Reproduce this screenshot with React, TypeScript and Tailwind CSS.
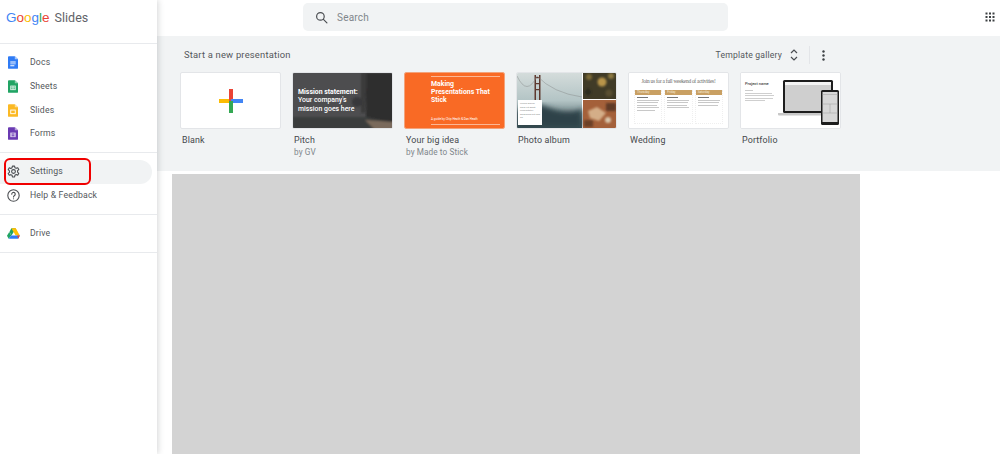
import React from "react";

const font = { fontFamily: '"Roboto", "Liberation Sans", sans-serif' };

function FileIcon({ body, fold, children }: { body: string; fold: string; children?: React.ReactNode }) {
  return (
    <svg width="10" height="13" viewBox="0 0 11 14">
      <path d="M1 0h6.500L11 3.500V13a1 1 0 0 1-1 1H1a1 1 0 0 1-1-1V1a1 1 0 0 1 1-1z" fill={body} />
      <path d="M7.500 0L11 3.500H7.500z" fill={fold} />
      {children}
    </svg>
  );
}

const DocsIcon = () => (
  <FileIcon body="#2f7bf5" fold="#a6c8fb">
    <path d="M2.500 6h6v1h-6zM2.500 8h6v1h-6zM2.500 10h4.500v1h-4.500z" fill="#fff" />
  </FileIcon>
);
const SheetsIcon = () => (
  <FileIcon body="#21a464" fold="#8ed1b1">
    <path d="M2.500 6h6v5h-6z" fill="#e4f4ec" />
    <path d="M3.500 7h1.500v1h-1.500zM6 7h1.500v1H6zM3.500 9h1.500v1h-1.500zM6 9h1.500v1H6z" fill="#21a464" />
  </FileIcon>
);
const SlidesIcon = () => (
  <FileIcon body="#fbb924" fold="#fde09a">
    <path d="M2.500 6h6v5h-6z" fill="#fff" />
    <path d="M3.500 7h4v3h-4z" fill="#fbb924" />
  </FileIcon>
);
const FormsIcon = () => (
  <FileIcon body="#6a3ab2" fold="#b9a0dd">
    <path d="M2.500 6h6v5h-6z" fill="#d9cdec" />
    <path d="M4 7h3v1H4zM4 9h3v1H4z" fill="#6a3ab2" />
  </FileIcon>
);

const GearIcon = () => (
  <svg width="13" height="13" viewBox="0 0 24 24" fill="none" stroke="#4a4d51" strokeWidth="2" strokeLinejoin="round">
    <path d="M10 2h4l.6 3 2.400 1.200 2.800-1.200 2 3.500-2.300 2 0 2.800 2.300 2-2 3.500-2.800-1.200L14.600 19 14 22h-4l-.6-3-2.400-1.200-2.800 1.200-2-3.500 2.300-2 0-2.800-2.300-2 2-3.500 2.800 1.200L9.400 5z" />
    <circle cx="12" cy="12" r="3.500" />
  </svg>
);
const HelpIcon = () => (
  <svg width="13" height="13" viewBox="0 0 24 24" fill="none" stroke="#4a4d51" strokeWidth="2" strokeLinecap="round">
    <circle cx="12" cy="12" r="10.500" />
    <path d="M8.800 9.500a3.200 3.200 0 1 1 5 2.600c-1.100.8-1.800 1.400-1.800 2.700" />
    <path d="M12 18v.1" />
  </svg>
);
const DriveIcon = () => (
  <svg width="13" height="11.500" viewBox="0 0 14 12">
    <path d="M4.700 0h4.600L7 4.400 4.900 8 2.600 4z" fill="#1fa463" />
    <path d="M4.700 0h4.600l4.600 8H9.300z" fill="#ffc107" />
    <path d="M2.400 4L0 8.200l1.800 3.200L4.700 8z" fill="#1fa463" />
    <path d="M4.400 8h9.500l-1.900 3.400H1.900z" fill="#2f7bf5" />
    <path d="M11 8h2.900L12 11.400z" fill="#ea4335" />
    <path d="M7 0h2.300l2.300 4z" fill="#fbbc04" />
  </svg>
);

function NavRow({ icon, label, active }: { icon: React.ReactNode; label: string; active?: boolean }) {
  return (
    <div className={`flex h-[23.700px] w-[152px] items-center rounded-r-full ${active ? "bg-[#f1f3f4]" : ""}`}>
      <div className="flex w-[26px] shrink-0 justify-center">{icon}</div>
      <span className="ml-[4px] text-[8.700px] tracking-[0.15px] text-[#54575b]">{label}</span>
    </div>
  );
}

function Thumb({ children, className = "" }: { children?: React.ReactNode; className?: string }) {
  return (
    <div className={`relative h-[57px] w-[101px] overflow-hidden rounded-[2px] border border-[#e3e5e8] ${className}`}>
      {children}
    </div>
  );
}

function Card({ thumb, title, sub }: { thumb: React.ReactNode; title: string; sub?: string }) {
  return (
    <div className="w-[101px]">
      {thumb}
      <div className="mt-[5px] pl-[2px] text-[8.900px] leading-[13px] tracking-[0.15px] text-[#45484c]">{title}</div>
      {sub && <div className="pl-[2px] text-[8.200px] leading-[10px] tracking-[0.1px] text-[#80868b]">{sub}</div>}
    </div>
  );
}

const PlusArt = () => (
  <div className="flex h-full items-center justify-center">
    <svg width="24" height="24" viewBox="0 0 24 24">
      <rect x="0" y="10" width="12" height="4" fill="#fbbc04" />
      <rect x="10" y="0" width="4" height="12" fill="#ea4335" />
      <rect x="12" y="10" width="12" height="4" fill="#4285f4" />
      <rect x="10" y="12" width="4" height="12" fill="#34a853" />
    </svg>
  </div>
);

const PitchArt = () => (
  <div className="h-full bg-[#4d4d4f] px-[5px] pt-[15px]">
    <svg className="absolute inset-0" width="101" height="57" viewBox="0 0 101 57">
      <defs>
        <filter id="pb"><feGaussianBlur stdDeviation="1" /></filter>
      </defs>
      <g filter="url(#pb)">
        <path d="M73 0h28v57H73z" fill="#2f2e2e" />
        <path d="M68 0h6l-2 40h-4z" fill="#3a3a3b" />
        <circle cx="64" cy="29" r="5" fill="#38383a" />
        <path d="M0 44h74l27 6v7H0z" fill="#3a3c3d" />
        <path d="M72 47l29 2v8H82z" fill="#7a6a5c" />
      </g>
    </svg>
    <div className="relative whitespace-nowrap text-[6.900px] leading-[8.300px] text-white">
      <div className="font-bold">Mission statement:</div>
      <div className="font-medium">Your company's</div>
      <div className="font-medium">mission goes here</div>
    </div>
  </div>
);

const BigIdeaArt = () => (
  <div className="relative h-full bg-[#f96a25] pl-[26px] pt-[3px] text-white">
    <div className="h-[1px] w-[69px] bg-[#fbb795]" />
    <div className="mt-[3px] text-[6.900px] font-bold leading-[8px]">
      Making
      <br />
      <span className="whitespace-nowrap">Presentations That</span>
      <br />
      Stick
    </div>
    <div className="mt-[13px] whitespace-nowrap text-[3px] leading-[4px]">A guide by Chip Heath &amp; Dan Heath</div>
    <div className="mt-[3px] h-[1px] w-[69px] bg-[#fbb795]" />
  </div>
);

const PhotoArt = () => (
  <svg width="99" height="55" viewBox="0 0 99 55" className="block">
    <defs>
      <linearGradient id="fog" x1="0" y1="0" x2="0" y2="1">
        <stop offset="0" stopColor="#d4dcdb" />
        <stop offset="0.5" stopColor="#b3c4c5" />
        <stop offset="1" stopColor="#3b5257" />
      </linearGradient>
      <filter id="ph"><feGaussianBlur stdDeviation="1.300" /></filter>
      <filter id="ph2"><feGaussianBlur stdDeviation="2.500" /></filter>
    </defs>
    <rect width="99" height="55" fill="#fff" />
    <rect width="65" height="55" fill="url(#fog)" />
    <path d="M0 55V38Q18 28 30 34Q50 42 65 36V55z" fill="#2d4348" filter="url(#ph2)" />
    <path d="M17.500 2h1.500v26h-1.500zM22 2h1.500v26H22zM17.500 4h6v1.200h-6zM17.500 10h6v1.200h-6zM17.500 16h6v1.200h-6z" fill="#5f3a30" />
    <path d="M0 3Q10 24 20 3Q36 20 65 24" fill="none" stroke="#8b8f8e" strokeWidth="0.500" />
    <svg x="66" y="0" width="33" height="26" viewBox="0 0 33 26">
      <rect width="33" height="26" fill="#403b27" />
      <g filter="url(#ph)">
        <circle cx="19" cy="9" r="4.500" fill="#b8944a" />
        <circle cx="6" cy="4" r="3" fill="#7d6b37" />
        <circle cx="28" cy="3" r="3" fill="#8c7840" />
        <circle cx="5" cy="19" r="3" fill="#2a2a1c" />
        <circle cx="26" cy="20" r="3.500" fill="#5a5030" />
      </g>
    </svg>
    <svg x="66" y="27" width="33" height="28" viewBox="0 0 33 28">
      <rect width="33" height="28" fill="#a4603a" />
      <g filter="url(#ph)">
        <path d="M5 11l9-4 9 6-7 8-9-3z" fill="#d4ae88" />
        <rect x="23" y="3" width="10" height="8" fill="#5f3a26" />
        <rect x="1" y="20" width="9" height="7" fill="#6c4028" />
        <circle cx="25" cy="20" r="3" fill="#d9c6ac" />
      </g>
    </svg>
  </svg>
);

const WeddingArt = () => (
  <div className="flex h-full flex-col bg-white px-[5px] pt-[4px]">
    <div
      className="whitespace-nowrap text-center text-[5.400px] leading-[8px] tracking-[-0.25px] text-[#666]"
      style={{ fontFamily: '"Liberation Serif", serif' }}
    >
      Join us for a full weekend of activities!
    </div>
    <div className="mt-[5px] grid grid-cols-3 gap-[2px]">
      {["Thursday", "Friday", "Saturday"].map((d, i) => (
        <div key={d} className="h-[34px] border border-t-0 border-dotted border-[#efefef]">
          <div className="h-[5px] bg-[#c9a063] pl-[2px] text-[3px] leading-[5px] text-[#f6ecdc]">{d}</div>
          <div className="mt-[2px] space-y-[1.500px] px-[2px]">
            <div className="h-[1px] w-[11px] bg-[#777]" />
            <div className="h-[1px] w-[22px] bg-[#c8c8c8]" />
            <div className="h-[1px] w-[21px] bg-[#c8c8c8]" />
            <div className="h-[1px] w-[20px] bg-[#c8c8c8]" />
            {i < 2 && <div className="h-[1px] w-[22px] bg-[#c8c8c8]" />}
            {i < 1 && <div className="h-[1px] w-[18px] bg-[#c8c8c8]" />}
          </div>
        </div>
      ))}
    </div>
  </div>
);

const PortfolioArt = () => (
  <div className="relative h-full bg-white">
    <div className="pl-[4px] pt-[8px] text-[4px] font-medium leading-[5px] text-[#444]">Project name</div>
    <div className="ml-[4px] mt-[4px] space-y-[1.500px]">
      <div className="h-[1px] w-[8px] bg-[#ccc]" />
      <div className="h-[1px] w-[27px] bg-[#cfcfcf]" />
      <div className="h-[1px] w-[29px] bg-[#cfcfcf]" />
      <div className="h-[1px] w-[28px] bg-[#cfcfcf]" />
      <div className="h-[1px] w-[20px] bg-[#cfcfcf]" />
    </div>
    <svg className="absolute left-[36px] top-[6px]" width="64" height="50" viewBox="0 0 64 50">
      <rect x="6" y="1" width="50" height="33" rx="1.500" fill="#1d1d1d" />
      <rect x="8" y="3" width="46" height="3" fill="#f4f4f4" />
      <rect x="8" y="6" width="46" height="26" fill="#cfcfcf" />
      <path d="M1 34h60v1.500a1 1 0 0 1-1 1H2a1 1 0 0 1-1-1z" fill="#c8c8c8" />
      <rect x="44" y="11" width="18" height="35" rx="1.500" fill="#1d1d1d" />
      <rect x="45.500" y="13" width="15" height="30" fill="#d8d8d8" />
      <path d="M45.500 15.500h15M45.500 25h15M45.500 34h15M53 25v9" stroke="#9f9f9f" strokeWidth="0.500" />
    </svg>
  </div>
);

export default function App() {
  return (
    <div className="flex h-[454px] w-[1000px] overflow-hidden bg-white" style={font}>
      <aside className="relative z-10 flex h-full w-[157px] shrink-0 flex-col bg-white shadow-[1px_0_6px_rgba(60,64,67,0.22)]">
        <div className="flex h-[43px] items-start pl-[6px] pt-[9px] leading-[18px]">
          <span className="text-[13.500px]" style={{ fontFamily: '"Liberation Sans", sans-serif' }}>
            <span className="text-[#4285f4]">G</span>
            <span className="text-[#ea4335]">o</span>
            <span className="text-[#fbbc05]">o</span>
            <span className="text-[#4285f4]">g</span>
            <span className="text-[#34a853]">l</span>
            <span className="text-[#ea4335]">e</span>
          </span>
          <span className="ml-[5px] text-[12.500px] text-[#5f6368]">Slides</span>
        </div>
        <div className="flex h-[110px] flex-col border-t border-b border-[#e8eaed] pt-[7px]">
          <NavRow icon={<DocsIcon />} label="Docs" />
          <NavRow icon={<SheetsIcon />} label="Sheets" />
          <NavRow icon={<SlidesIcon />} label="Slides" />
          <NavRow icon={<FormsIcon />} label="Forms" />
        </div>
        <div className="flex h-[62px] flex-col border-b border-[#e8eaed] pt-[7px]">
          <NavRow icon={<GearIcon />} label="Settings" active />
          <NavRow icon={<HelpIcon />} label="Help & Feedback" />
        </div>
        <div className="flex h-[38px] flex-col justify-center border-b border-[#e8eaed]">
          <NavRow icon={<DriveIcon />} label="Drive" />
        </div>
        <div className="absolute left-[4px] top-[158px] h-[27px] w-[87px] rounded-[6px] border-[2px] border-[#f00000]" />
      </aside>

      <main className="flex min-w-0 flex-1 flex-col">
        <header className="relative flex h-[36px] shrink-0 items-start bg-white pl-[146px]">
          <div className="mt-[3px] flex h-[28px] w-[425px] items-center rounded-[5px] bg-[#f1f3f4] pl-[12px]">
            <svg width="13" height="13" viewBox="0 0 24 24" fill="none" stroke="#4a4d51" strokeWidth="2.200" strokeLinecap="round">
              <circle cx="10" cy="10" r="7" />
              <path d="M15.500 15.500L22 22" />
            </svg>
            <span className="ml-[9px] text-[10px] tracking-[0.2px] text-[#80868b]">Search</span>
          </div>
          <svg className="absolute right-[5px] top-[12px]" width="10" height="10" viewBox="0 0 10 10" fill="#3c4043">
            {[0.5, 4, 7.5].flatMap((y) =>
              [0.5, 4, 7.5].map((x) => <rect key={`${x}-${y}`} x={x} y={y} width="2" height="2" />)
            )}
          </svg>
        </header>

        <section className="h-[135px] shrink-0 bg-[#f1f3f4] pl-[23px]">
          <div className="flex h-[36px] items-center pt-[2px]">
            <span className="ml-[4px] text-[9.400px] tracking-[0.2px] text-[#54575b]">Start a new presentation</span>
            <div className="ml-auto flex items-center">
              <span className="text-[8.600px] tracking-[0.2px] text-[#54575b]">Template gallery</span>
              <svg className="ml-[8px]" width="8" height="12" viewBox="0 0 8 12" fill="none" stroke="#4a4d51" strokeWidth="1.200">
                <path d="M1 4l3-3 3 3M1 8l3 3 3-3" />
              </svg>
              <div className="ml-[11px] h-[18px] w-[1px] bg-[#e3e5e8]" />
              <svg className="ml-[12px] mr-[175px]" width="3" height="11" viewBox="0 0 3 11" fill="#3c4043">
                <circle cx="1.500" cy="1.500" r="1.200" />
                <circle cx="1.500" cy="5.500" r="1.200" />
                <circle cx="1.500" cy="9.500" r="1.200" />
              </svg>
            </div>
          </div>
          <div className="flex gap-[11px]">
            <Card thumb={<Thumb className="bg-white"><PlusArt /></Thumb>} title="Blank" />
            <Card thumb={<Thumb className="border-[#d5d5d5]"><PitchArt /></Thumb>} title="Pitch" sub="by GV" />
            <Card thumb={<Thumb className="border-[#f3a37b]"><BigIdeaArt /></Thumb>} title="Your big idea" sub="by Made to Stick" />
            <Card
              thumb={
                <Thumb className="bg-white">
                  <PhotoArt />
                  <div className="absolute bottom-[3px] left-[1px] h-[25px] w-[24px] bg-white px-[2px] pt-[2px] text-[2.500px] leading-[3.500px] text-[#888]">
                    Lorem ipsum dolor sit amet consectetur adipiscing elit sed do
                  </div>
                </Thumb>
              }
              title="Photo album"
            />
            <Card thumb={<Thumb className="bg-white"><WeddingArt /></Thumb>} title="Wedding" />
            <Card thumb={<Thumb className="bg-white"><PortfolioArt /></Thumb>} title="Portfolio" />
          </div>
        </section>

        <div className="ml-[15px] mt-[3px] w-[688px] flex-1 bg-[#d3d3d3]" />
      </main>
    </div>
  );
}
